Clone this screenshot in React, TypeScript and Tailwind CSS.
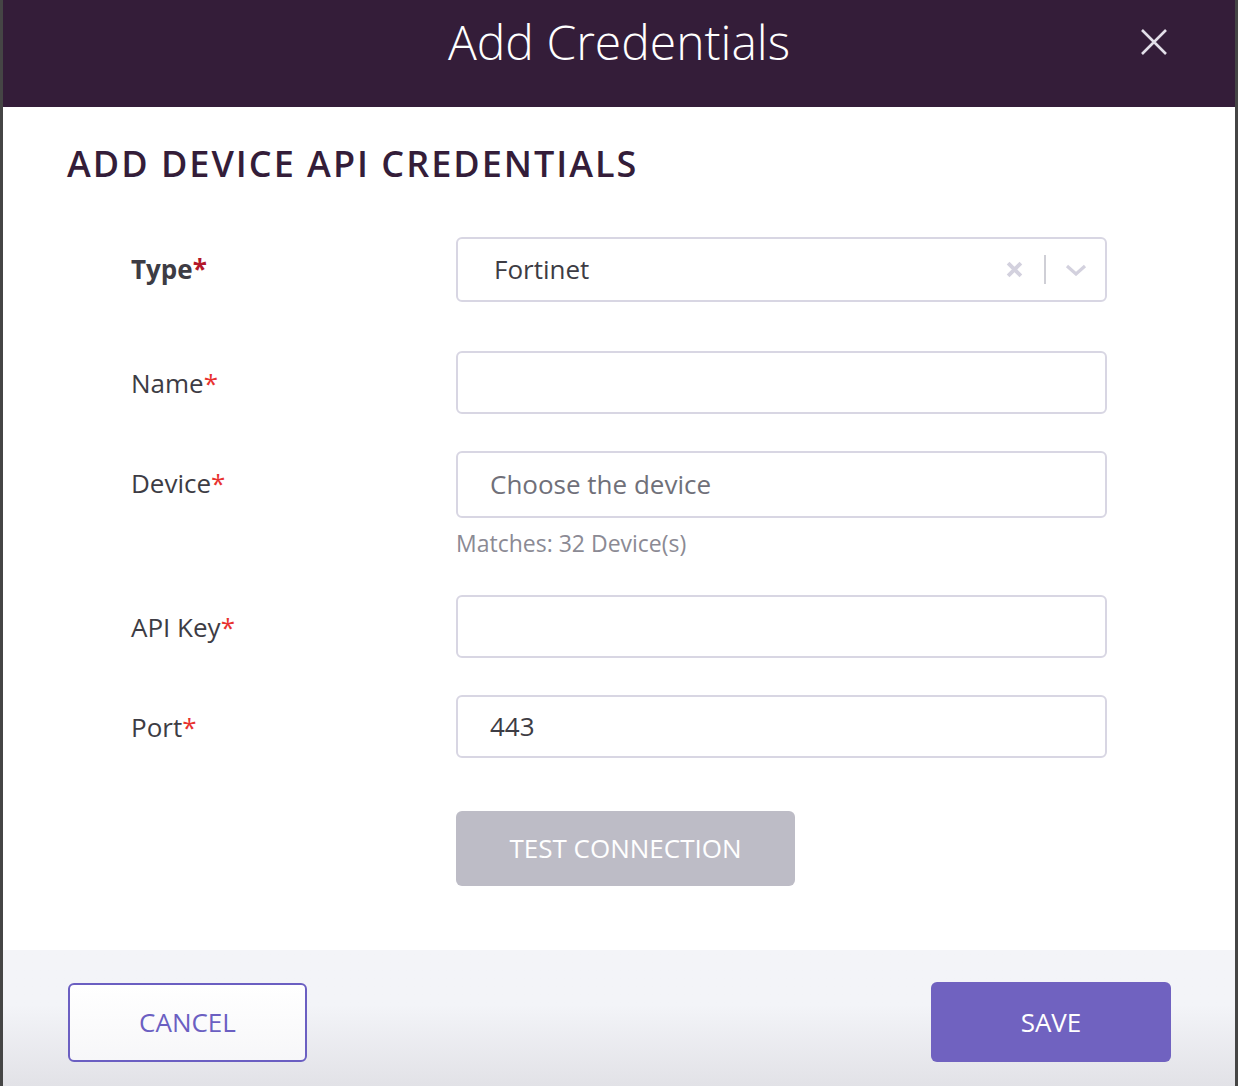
import React from 'react';

const font = { fontFamily: '"Open Sans", "Noto Sans", sans-serif' };

function Field({
  label,
  bold,
  children,
  className,
}: {
  label: string;
  bold?: boolean;
  children: React.ReactNode;
  className?: string;
}) {
  return (
    <div className={`flex items-start ${className ?? ''}`}>
      <div className="w-[453px] shrink-0 pl-[128px] pt-[3px] flex items-center h-[62px]">
        <span className={`text-[26px] text-[#3d3c44] ${bold ? 'font-bold' : ''}`}>
          {label}
          <span className={bold ? 'text-[#b3182a]' : 'text-[#e8322f]'}>*</span>
        </span>
      </div>
      <div className="w-[651px]">{children}</div>
    </div>
  );
}

function Box({ h, children }: { h: string; children?: React.ReactNode }) {
  return (
    <div className={`${h} w-full rounded-[6px] border-2 border-[#d8d6e3] bg-white flex items-center`}>
      {children}
    </div>
  );
}

export default function App() {
  return (
    <div className="w-[1238px] h-[1086px] bg-[#454545] flex pl-[3px] overflow-hidden" style={font}>
      <div className="w-[1232px] h-full flex flex-col bg-white">
        {/* header */}
        <div className="relative h-[107px] shrink-0 bg-[#341d39] flex items-center justify-center">
          <h1 className="text-[48px] font-light text-white leading-none pb-[24px]">Add Credentials</h1>
          <button className="absolute right-[67px] top-[28px] w-[28px] h-[28px]">
            <svg viewBox="0 0 28 28" className="w-[28px] h-[28px]">
              <path d="M2 2 L26 26 M26 2 L2 26" stroke="#e3dfe9" strokeWidth="2.6" />
            </svg>
          </button>
        </div>

        {/* body */}
        <div className="flex-1 flex flex-col">
          <h2 className="pl-[64px] mt-[32px] text-[36px] leading-[50px] font-semibold tracking-[2px] text-[#341d39]">
            ADD DEVICE API CREDENTIALS
          </h2>

          <Field label="Type" bold className="mt-[48px]">
            <Box h="h-[65px]">
              <span className="pl-[36px] text-[26px] text-[#3d3c44] flex-1">Fortinet</span>
              <svg viewBox="0 0 16 16" className="w-[17px] h-[17px] mr-[21px]">
                <path d="M2 2 L14 14 M14 2 L2 14" stroke="#d3d1de" strokeWidth="3.6" />
              </svg>
              <div className="w-[2px] h-[29px] bg-[#cfcfd6]" />
              <svg viewBox="0 0 22 12" className="w-[22px] h-[12px] ml-[19px] mr-[18px]">
                <path d="M2 2 L11 10 L20 2" stroke="#d3d1de" strokeWidth="3.2" fill="none" />
              </svg>
            </Box>
          </Field>

          <Field label="Name" className="mt-[49px]">
            <Box h="h-[63px]" />
          </Field>

          <Field label="Device" className="mt-[37px]">
            <Box h="h-[67px]">
              <span className="pl-[32px] text-[26px] text-[#707079]">Choose the device</span>
            </Box>
            <div className="mt-[8px] text-[23px] text-[#8b8a94] leading-[34px]">Matches: 32 Device(s)</div>
          </Field>

          <Field label="API Key" className="mt-[35px]">
            <Box h="h-[63px]" />
          </Field>

          <Field label="Port" className="mt-[37px]">
            <Box h="h-[63px]">
              <span className="pl-[32px] text-[26px] text-[#3d3c44]">443</span>
            </Box>
          </Field>

          <div className="pl-[453px] mt-[53px]">
            <button className="w-[339px] h-[75px] rounded-[6px] bg-[#bdbcc6] text-white text-[26px]">
              TEST CONNECTION
            </button>
          </div>
        </div>

        {/* footer */}
        <div className="h-[136px] shrink-0 bg-gradient-to-b from-[#f3f4f8] from-40% to-[#e2e2e7] flex items-start justify-between pl-[65px] pr-[64px] pt-[32px]">
          <button className="mt-[1px] w-[239px] h-[79px] rounded-[6px] border-2 border-[#6b5fc2] bg-gradient-to-b from-white to-[#f7f7f9] text-[#6b5fc2] text-[26px]">
            CANCEL
          </button>
          <button className="w-[240px] h-[80px] rounded-[6px] bg-[#7062c0] text-white text-[26px]">
            SAVE
          </button>
        </div>
      </div>
      <div className="w-[3px] h-full bg-[#454545]" />
    </div>
  );
}
